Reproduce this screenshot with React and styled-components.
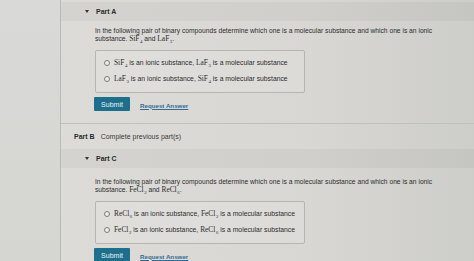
import React from "react"
import styled, { createGlobalStyle } from "styled-components"

const GlobalStyle = createGlobalStyle`
  html, body {
    margin: 0;
    padding: 0;
    background: #d9d9d6;
  }
  body {
    font-family: "Liberation Sans", Arial, sans-serif;
    color: #2a2a2a;
  }
`

const parts = [
  {
    id: "A",
    gap: 6,
    a: ["SiF", "4"],
    b: ["LaF", "3"],
    options: [
      { ionic: ["SiF", "4"], molecular: ["LaF", "3"] },
      { ionic: ["LaF", "3"], molecular: ["SiF", "4"] }
    ]
  },
  {
    id: "C",
    gap: 10,
    a: ["FeCl", "2"],
    b: ["ReCl", "6"],
    options: [
      { ionic: ["ReCl", "6"], molecular: ["FeCl", "2"] },
      { ionic: ["FeCl", "2"], molecular: ["ReCl", "6"] }
    ]
  }
]

const Formula = ({ f }) => (
  <Chem>
    {f[0]}
    <sub>{f[1]}</sub>
  </Chem>
)

const Part = ({ part, first }) => (
  <PartBlock $first={first}>
    <PartHeader>
      <Caret />
      <PartTitle>Part {part.id}</PartTitle>
    </PartHeader>
    <PartBody $gap={part.gap}>
      <Question>
        In the following pair of binary compounds determine which one is a molecular substance and which one is an ionic
        substance. <Formula f={part.a} /> and <Formula f={part.b} />.
      </Question>
      <AnswerBox>
        {part.options.map((o, i) => (
          <Option key={i}>
            <Radio />
            <span>
              <Formula f={o.ionic} /> is an ionic substance, <Formula f={o.molecular} /> is a molecular substance
            </span>
          </Option>
        ))}
      </AnswerBox>
      <Actions>
        <SubmitButton>Submit</SubmitButton>
        <RequestLink>Request Answer</RequestLink>
      </Actions>
    </PartBody>
  </PartBlock>
)

export default function App() {
  return (
    <>
      <GlobalStyle />
      <Page>
        <Sidebar />
        <Main>
          <Part part={parts[0]} first />
          <Divider />
          <PartBRow>
            <strong>Part B</strong>
            <span>Complete previous part(s)</span>
          </PartBRow>
          <Part part={parts[1]} />
        </Main>
      </Page>
    </>
  )
}

const Page = styled.div`
  display: flex;
  width: 474px;
  height: 261px;
  overflow: hidden;
`
const Sidebar = styled.div`
  width: 60px;
  flex-shrink: 0;
  background: linear-gradient(180deg, #d9d9d7 0%, #d5d5d2 100%);
  border-right: 1px solid #b9b9b6;
`
const Main = styled.div`
  flex: 1;
  background: linear-gradient(90deg, #dcdbd8 0%, #d8d7d3 60%, #cdcdc9 100%);
`
const PartBlock = styled.div`
  padding-top: ${(p) => (p.$first ? "2px" : "6px")};
`
const PartHeader = styled.div`
  display: flex;
  align-items: center;
  height: 19px;
  padding-left: 24px;
  background: rgba(0, 0, 0, 0.035);
`
const Caret = styled.span`
  width: 0;
  height: 0;
  border-left: 2.5px solid transparent;
  border-right: 2.5px solid transparent;
  border-top: 3px solid #333;
  margin-right: 7px;
`
const PartTitle = styled.span`
  font-size: 7px;
  font-weight: bold;
  color: #2b2b2b;
`
const PartBody = styled.div`
  padding-left: 34px;
  padding-top: ${(p) => p.$gap}px;
`
const Question = styled.p`
  margin: 0;
  font-size: 6.7px;
  line-height: 8px;
  height: 16px;
  color: #2d2d2d;
  width: 345px;
`
const Chem = styled.span`
  font-family: "Liberation Serif", "Times New Roman", serif;
  font-size: 7.4px;
  line-height: 7px;
  sub {
    display: inline-block;
    margin-left: 0.6px;
    font-size: 4.8px;
    line-height: 4px;
    vertical-align: baseline;
    position: relative;
    top: 1.5px;
  }
`
const AnswerBox = styled.div`
  width: 196px;
  margin-top: 7px;
  padding: 4px 6px 5px;
  border: 1px solid #b5b5b1;
  border-radius: 2px;
  background: rgba(255, 255, 255, 0.12);
`
const Option = styled.label`
  display: flex;
  align-items: center;
  height: 16px;
  padding-left: 2px;
  font-size: 6.8px;
  line-height: 8px;
  white-space: nowrap;
  color: #2d2d2d;
`
const Radio = styled.span`
  width: 4px;
  height: 4px;
  border: 1px solid #7d7d7b;
  border-radius: 50%;
  background: #ececea;
  margin-right: 4px;
  flex-shrink: 0;
`
const Actions = styled.div`
  display: flex;
  align-items: center;
  gap: 10px;
  height: 14px;
  margin-top: 4px;
  margin-left: -1px;
`
const SubmitButton = styled.button`
  width: 36px;
  height: 14px;
  padding: 0;
  border: none;
  border-radius: 1px;
  background: #1e6f8c;
  color: #e8f1f4;
  font-family: "Liberation Sans", Arial, sans-serif;
  font-size: 7px;
`
const RequestLink = styled.a`
  font-size: 6.2px;
  font-weight: bold;
  color: #346b93;
  text-decoration: underline;
  margin-top: 2px;
`
const Divider = styled.div`
  height: 1px;
  margin-top: 12px;
  background: #c0c0bc;
`
const PartBRow = styled.div`
  display: flex;
  align-items: center;
  gap: 6px;
  height: 14px;
  padding-left: 13px;
  margin-top: 5px;
  font-size: 7px;
  color: #3a3a3a;
  strong {
    color: #2b2b2b;
  }
`
